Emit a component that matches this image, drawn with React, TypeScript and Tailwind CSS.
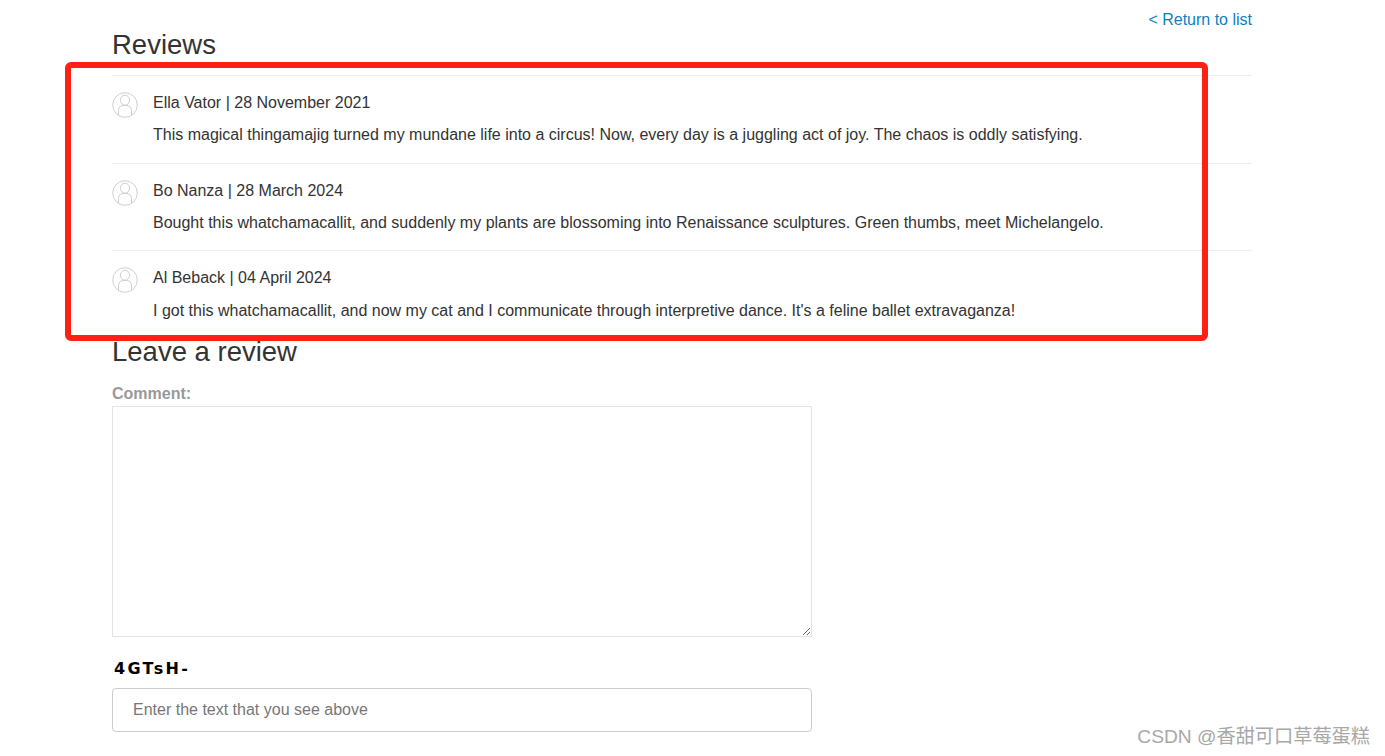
import { ReactNode } from 'react'

const REVIEWS = [
  {
    name: 'Ella Vator',
    date: '28 November 2021',
    text: 'This magical thingamajig turned my mundane life into a circus! Now, every day is a juggling act of joy. The chaos is oddly satisfying.',
  },
  {
    name: 'Bo Nanza',
    date: '28 March 2024',
    text: 'Bought this whatchamacallit, and suddenly my plants are blossoming into Renaissance sculptures. Green thumbs, meet Michelangelo.',
  },
  {
    name: 'Al Beback',
    date: '04 April 2024',
    text: "I got this whatchamacallit, and now my cat and I communicate through interpretive dance. It's a feline ballet extravaganza!",
  },
]

function Avatar() {
  return (
    <svg width="26" height="26" viewBox="0 0 26 26" fill="none" stroke="#cfcfcf" strokeWidth="1" className="shrink-0">
      <circle cx="13" cy="13" r="12.3" />
      <ellipse cx="13" cy="8.2" rx="4.6" ry="5" />
      <path d="M6.5 23v-4.5c0-3 2-5 4.5-5h4c2.5 0 4.5 2 4.5 5V23" />
    </svg>
  )
}

function Heading({ children }: { children: ReactNode }) {
  return <h2 className="text-[27.5px] leading-[31px] text-[#333333]">{children}</h2>
}

export default function App() {
  return (
    <div className="relative h-[756px] overflow-hidden bg-white font-['Liberation_Sans',Arial,sans-serif] text-base text-[#333333]">
      <div className="ml-[112px] w-[1140px] pt-[11px]">
        <div className="flex justify-end leading-[18px]">
          <a href="#" className="text-[#0e7fc4]">&lt; Return to list</a>
        </div>

        {/* Reviews */}
        <Heading>Reviews</Heading>
        <div className="mt-[15px]">
          {REVIEWS.map((r) => (
            <div key={r.name} className="flex h-[87.67px] gap-[15px] border-t border-[#eeeeee] pt-4">
              <Avatar />
              <div className="pt-[1px]">
                <p className="leading-5">{r.name} | {r.date}</p>
                <p className="mt-[12.3px] leading-5">{r.text}</p>
              </div>
            </div>
          ))}
        </div>

        {/* Form */}
        <div className="-mt-[1.5px]">
          <Heading>Leave a review</Heading>
        </div>
        <label className="mt-[18px] block font-bold leading-[18px] text-[#999999]">Comment:</label>
        <textarea className="mt-[3px] block h-[231px] w-[700px] border border-[#e4e4e4] outline-none" />
        <div className="mt-[23px] pl-[2px] font-['DejaVu_Sans',sans-serif] text-base font-bold leading-[18px] tracking-[2.3px] text-black">4GTsH-</div>
        <input
          placeholder="Enter the text that you see above"
          className="mt-[10px] block h-[44px] w-[700px] rounded border border-[#cccccc] px-5 outline-none placeholder:text-[#777777]"
        />
      </div>

      {/* Annotation drawn over the page */}
      <div className="pointer-events-none absolute left-[65px] top-[62px] h-[279px] w-[1143px] rounded-[6px] border-[6px] border-[#ff2015]" />

      {/* Watermark */}
      <div className="absolute bottom-[7px] right-[15px] font-['Liberation_Sans','Noto_Sans_CJK_SC',sans-serif] text-[19.2px] leading-6 text-[#a8a8a8]">
        CSDN @香甜可口草莓蛋糕
      </div>
    </div>
  )
}
